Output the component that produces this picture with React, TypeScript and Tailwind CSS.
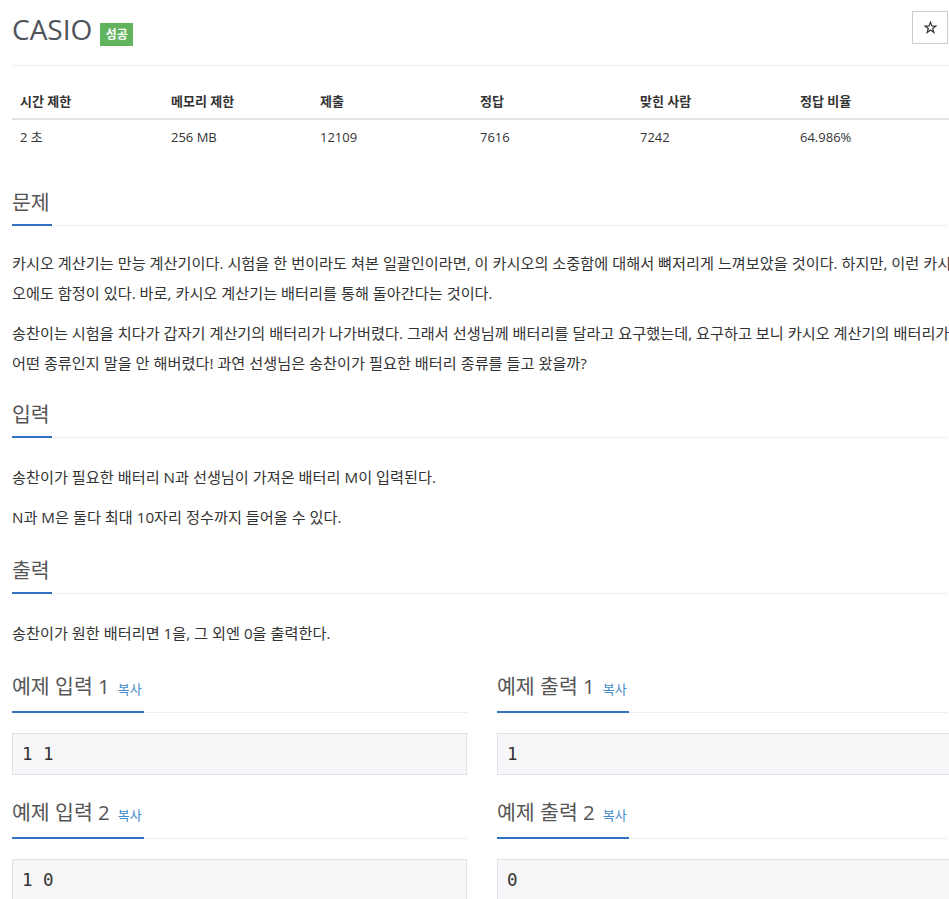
const FONT = "font-['Open_Sans','Noto_Sans_CJK_KR',sans-serif]";

const stats = [
  ["시간 제한", "2 초"],
  ["메모리 제한", "256 MB"],
  ["제출", "12109"],
  ["정답", "7616"],
  ["맞힌 사람", "7242"],
  ["정답 비율", "64.986%"],
];

function Headline({ title, copy }: { title: string; copy?: boolean }) {
  return (
    <div className="border-b border-dotted border-[#ddd]">
      <h2 className="-mb-px inline-block border-b-2 border-[#3173c0] pb-[10px] pr-[2px] text-[20.5px] leading-6 font-normal text-[#555]">
        {title}
        {copy && (
          <span className="ml-[8px] text-[13px] text-[#428bca]">복사</span>
        )}
      </h2>
    </div>
  );
}

function Sample({ title, value }: { title: string; value: string }) {
  return (
    <div className="flex flex-col gap-5">
      <Headline title={title} copy />
      <pre className="flex h-[42px] items-center border border-[#e1e1e8] bg-[#f7f7f9] px-[9px] font-['DejaVu_Sans_Mono',monospace] text-[17.5px] text-[#333]">
        {value}
      </pre>
    </div>
  );
}

export default function App() {
  return (
    <div className={`w-full overflow-hidden bg-white ${FONT}`}>
      <div className="ml-3 w-[940px] pb-10">
        <div className="flex h-[66px] items-start justify-between border-b border-[#eee] pt-[11px]">
          <div className="flex items-center gap-2">
            <h1 className="text-[28px] leading-9 font-normal text-[#4f545c]">CASIO</h1>
            <span className="mt-[11px] flex h-[23px] w-[33px] items-center justify-center bg-[#62b35e] text-[12px] font-bold text-white">
              성공
            </span>
          </div>
          <button
            aria-label="즐겨찾기"
            className="mr-1 flex h-[33px] w-9 items-center justify-center border border-[#ccc] bg-white"
          >
            <svg width="13" height="13" viewBox="0 0 24 24" fill="none" stroke="#333" strokeWidth="2.2" strokeLinejoin="miter">
              <polygon points="12,2 14.6,9.2 22,9.3 16.1,13.9 18.2,21.2 12,16.8 5.8,21.2 7.9,13.9 2,9.3 9.4,9.2" />
            </svg>
          </button>
        </div>

        <div className="mt-5 grid grid-cols-[151px_149px_160px_160px_160px_160px] text-[13px] text-[#333]">
          {stats.map(([label]) => (
            <div
              key={label}
              className="flex h-[34px] items-center border-b-2 border-[#e4e4e4] px-2 font-bold"
            >
              {label}
            </div>
          ))}
          {stats.map(([label, value]) => (
            <div key={label} className="flex h-9 items-center px-2">
              {value}
            </div>
          ))}
        </div>

        <section className="mt-[34px] flex flex-col gap-[22px]">
          <Headline title="문제" />
          <div className="flex flex-col gap-[10px] text-[15.2px] leading-[30px] text-[#333]">
            <p>
              카시오 계산기는 만능 계산기이다. 시험을 한 번이라도 쳐본 일괄인이라면, 이 카시오의 소중함에 대해서 뼈저리게 느껴보았을 것이다. 하지만, 이런 카시오에도 함정이 있다. 바로, 카시오 계산기는 배터리를 통해 돌아간다는 것이다.
            </p>
            <p>
              송찬이는 시험을 치다가 갑자기 계산기의 배터리가 나가버렸다. 그래서 선생님께 배터리를 달라고 요구했는데, 요구하고 보니 카시오 계산기의 배터리가 어떤 종류인지 말을 안 해버렸다! 과연 선생님은 송찬이가 필요한 배터리 종류를 들고 왔을까?
            </p>
          </div>
        </section>

        <section className="mt-6 flex flex-col gap-6">
          <Headline title="입력" />
          <div className="flex flex-col gap-[10px] text-[15.2px] leading-[30px] text-[#333]">
            <p>송찬이가 필요한 배터리 N과 선생님이 가져온 배터리 M이 입력된다.</p>
            <p>N과 M은 둘다 최대 10자리 정수까지 들어올 수 있다.</p>
          </div>
        </section>

        <section className="mt-[26px] flex flex-col gap-6">
          <Headline title="출력" />
          <p className="text-[15.2px] leading-[30px] text-[#333]">
            송찬이가 원한 배터리면 1을, 그 외엔 0을 출력한다.
          </p>
        </section>

        <div className="mt-[26px] grid grid-cols-2 gap-x-[30px] gap-y-[25px]">
          <Sample title="예제 입력 1" value="1 1" />
          <Sample title="예제 출력 1" value="1" />
          <Sample title="예제 입력 2" value="1 0" />
          <Sample title="예제 출력 2" value="0" />
        </div>
      </div>
    </div>
  );
}
